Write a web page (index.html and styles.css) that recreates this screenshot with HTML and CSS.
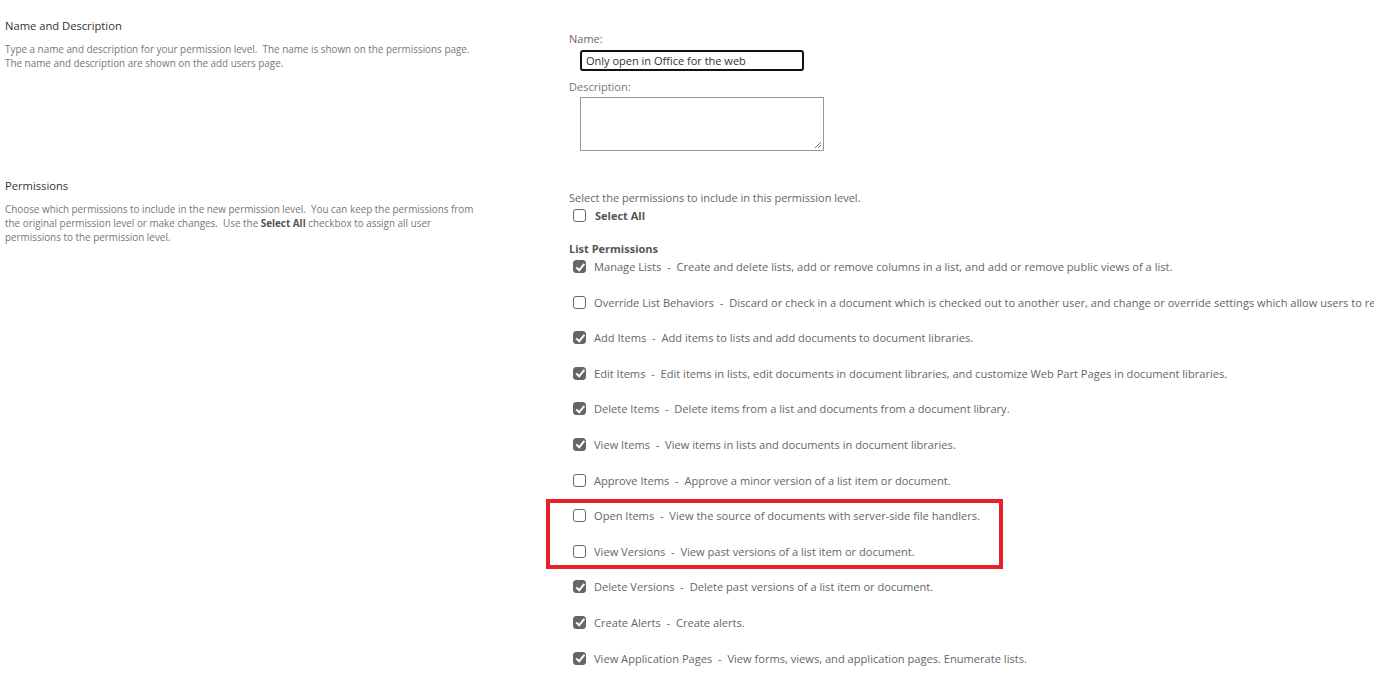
FILE: index.html
```html
<!DOCTYPE html>
<html>
<head>
<meta charset="utf-8">
<link rel="stylesheet" href="styles.css">
</head>
<body>
<div class="page">
  <section class="sec sec-name">
    <div class="left">
      <h3 class="head">Name and Description</h3>
      <p class="desc">Type a name and description for your permission level.&nbsp; The name is shown on the permissions page.<br>The name and description are shown on the add users page.</p>
    </div>
    <div class="right">
      <div class="lbl">Name:</div>
      <div class="input">Only open in Office for the web</div>
      <div class="lbl lbl-desc">Description:</div>
      <div class="textarea">
        <svg class="grip" width="8" height="8" viewBox="0 0 8 8"><path d="M7 1L1 7M7 4L4 7" stroke="#777" stroke-width="1"/></svg>
      </div>
    </div>
  </section>
  <section class="sec sec-perm">
    <div class="left">
      <h3 class="head">Permissions</h3>
      <p class="desc">Choose which permissions to include in the new permission level.&nbsp; You can keep the permissions from<br>the original permission level or make changes.&nbsp; Use the <b>Select All</b> checkbox to assign all user<br>permissions to the permission level.</p>
    </div>
    <div class="right">
      <div class="intro">Select the permissions to include in this permission level.</div>
      <div class="selall"><span class="cb"></span><b>Select All</b></div>
      <div class="group">List Permissions</div>
      <div class="rows">
        <div class="row"><span class="cb on"></span><span>Manage Lists&nbsp; -&nbsp; Create and delete lists, add or remove columns in a list, and add or remove public views of a list.</span></div>
        <div class="row"><span class="cb"></span><span>Override List Behaviors&nbsp; -&nbsp; Discard or check in a document which is checked out to another user, and change or override settings which allow users to read/edit only their own items</span></div>
        <div class="row"><span class="cb on"></span><span>Add Items&nbsp; -&nbsp; Add items to lists and add documents to document libraries.</span></div>
        <div class="row"><span class="cb on"></span><span>Edit Items&nbsp; -&nbsp; Edit items in lists, edit documents in document libraries, and customize Web Part Pages in document libraries.</span></div>
        <div class="row"><span class="cb on"></span><span>Delete Items&nbsp; -&nbsp; Delete items from a list and documents from a document library.</span></div>
        <div class="row"><span class="cb on"></span><span>View Items&nbsp; -&nbsp; View items in lists and documents in document libraries.</span></div>
        <div class="row"><span class="cb"></span><span>Approve Items&nbsp; -&nbsp; Approve a minor version of a list item or document.</span></div>
        <div class="highlight">
          <div class="row"><span class="cb"></span><span>Open Items&nbsp; -&nbsp; View the source of documents with server-side file handlers.</span></div>
          <div class="row"><span class="cb"></span><span>View Versions&nbsp; -&nbsp; View past versions of a list item or document.</span></div>
        </div>
        <div class="row"><span class="cb on"></span><span>Delete Versions&nbsp; -&nbsp; Delete past versions of a list item or document.</span></div>
        <div class="row"><span class="cb on"></span><span>Create Alerts&nbsp; -&nbsp; Create alerts.</span></div>
        <div class="row"><span class="cb on"></span><span>View Application Pages&nbsp; -&nbsp; View forms, views, and application pages. Enumerate lists.</span></div>
      </div>
    </div>
  </section>
</div>
</body>
</html>
```
FILE: styles.css
```css
html, body {
  margin: 0;
  padding: 0;
  background: #fff;
  overflow: hidden;
}
.page {
  font-family: "Open Sans", "Noto Sans", sans-serif;
  color: #666;
  width: 1374px;
  height: 700px;
  overflow: hidden;
}
.sec {
  display: grid;
  grid-template-columns: 569px 1fr;
}
.left {
  padding-left: 5px;
}
.head {
  margin: 0;
  font-weight: normal;
  font-size: 11.2px;
  color: #333;
  line-height: 16px;
}
.desc {
  margin: 8px 0 0;
  font-size: 9.9px;
  line-height: 14px;
  color: #777;
}
.desc b { color: #555; }
.sec-name { padding-top: 18px; height: 160px; box-sizing: border-box; }
.sec-name .right { padding-top: 13px; }
.lbl {
  font-size: 11px;
  line-height: 15px;
  color: #766;
}
.input {
  margin: 4px 0 0 11px;
  width: 216px;
  height: 17px;
  border: 2px solid #111;
  border-radius: 3px;
  font-size: 11px;
  line-height: 17px;
  color: #333;
  padding-left: 4px;
}
.lbl-desc { margin-top: 8px; color: #777; }
.textarea {
  margin: 3px 0 0 11px;
  width: 242px;
  height: 52px;
  border: 1px solid #999;
  position: relative;
}
.grip { position: absolute; right: 1px; bottom: 1px; }
.sec-perm { padding-top: 18px; }
.sec-perm .right { padding-top: 12px; }
.intro { font-size: 11px; line-height: 15px; }
.selall {
  display: flex;
  align-items: center;
  gap: 9px;
  margin: 3px 0 0 4px;
  font-size: 11px;
  line-height: 15px;
  color: #555;
}
.group {
  margin-top: 18px;
  font-size: 11px;
  font-weight: bold;
  line-height: 15px;
  color: #555;
}
.rows { margin-top: 3px; }
.row {
  display: flex;
  gap: 8px;
  height: 35.6px;
  padding-left: 4px;
  white-space: nowrap;
  font-size: 11.1px;
  line-height: 15px;
  align-items: flex-start;
}
.row .cb { margin-top: 1px; }
.cb {
  flex: none;
  width: 11px;
  height: 11px;
  border: 1px solid #666;
  border-radius: 3px;
  background: #fff;
  position: relative;
}
.cb.on {
  background: #666;
}
.cb.on::after {
  content: "";
  position: absolute;
  left: 3.5px;
  top: 0.5px;
  width: 3px;
  height: 6.5px;
  border: solid #fff;
  border-width: 0 2px 2px 0;
  transform: rotate(40deg);
}
.highlight {
  position: relative;
}
.highlight::before {
  content: "";
  position: absolute;
  left: -23px;
  top: -9px;
  width: 457px;
  height: 70px;
  box-sizing: border-box;
  border: 4px solid #e8202a;
  pointer-events: none;
}
```
